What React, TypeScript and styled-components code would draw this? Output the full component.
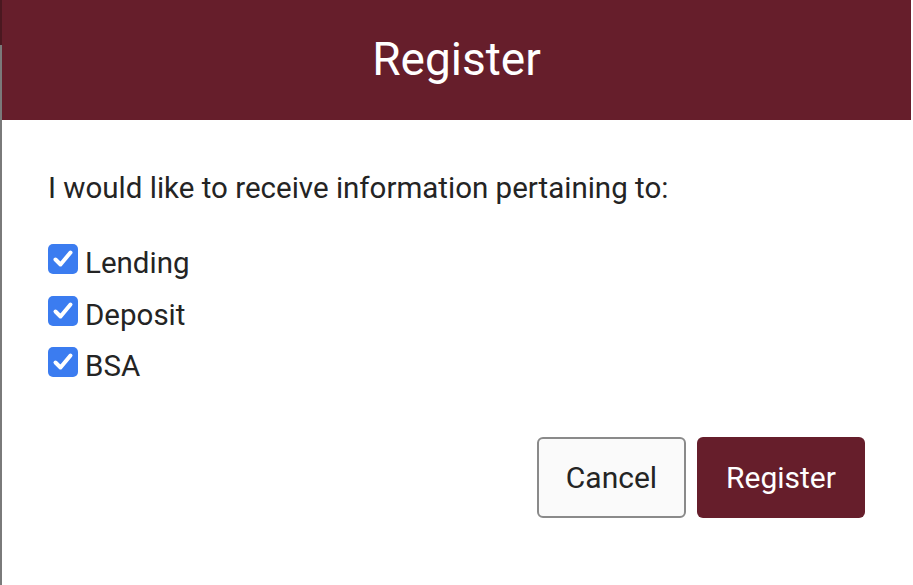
import { useState } from "react";
import styled, { createGlobalStyle } from "styled-components";

const GlobalStyle = createGlobalStyle`
  html, body {
    margin: 0;
    padding: 0;
    height: 100%;
  }
  body {
    font-family: Roboto, "Liberation Sans", Arial, sans-serif;
    background:
      linear-gradient(#4a1820, #4a1820) 0 0 / 2px 45px no-repeat,
      linear-gradient(#7a7a7a, #7a7a7a) 0 0 / 2px 100% no-repeat,
      #ffffff;
  }
`;

const Modal = styled.div`
  margin-left: 2px;
  width: 909px;
  background: #ffffff;
`;

const Header = styled.header`
  height: 120px;
  background: #661e2b;
  display: flex;
  align-items: center;
  justify-content: center;
  h2 {
    margin: 0;
    color: #ffffff;
    font-size: 46px;
    font-weight: 400;
    line-height: 1.2;
  }
`;

const Body = styled.div`
  padding: 51px 46px 0 46px;
`;

const Intro = styled.p`
  margin: 0 0 31px 0;
  font-size: 29.5px;
  line-height: 1.2;
  color: #242424;
`;

const OptionList = styled.div`
  display: flex;
  flex-direction: column;
`;

const Option = styled.label`
  height: 51.5px;
  display: flex;
  align-items: center;
  gap: 7px;
  cursor: pointer;
  font-size: 29.5px;
  color: #242424;
`;

const Box = styled.span<{ $checked: boolean }>`
  width: 30px;
  height: 30px;
  margin-bottom: 8px;
  border-radius: 5px;
  box-sizing: border-box;
  display: flex;
  align-items: center;
  justify-content: center;
  background: ${(p) => (p.$checked ? "#3b7cf0" : "#ffffff")};
  border: ${(p) => (p.$checked ? "none" : "2px solid #767676")};
  input {
    display: none;
  }
`;

const Actions = styled.div`
  display: flex;
  justify-content: flex-end;
  gap: 11px;
  margin-top: 45px;
`;

const Button = styled.button<{ $primary?: boolean }>`
  height: 81px;
  padding: 0;
  border-radius: 6px;
  font-family: Roboto, "Liberation Sans", Arial, sans-serif;
  font-size: 30px;
  cursor: pointer;
  box-sizing: border-box;
  width: ${(p) => (p.$primary ? "168px" : "149px")};
  background: ${(p) => (p.$primary ? "#661e2b" : "#fafafa")};
  color: ${(p) => (p.$primary ? "#ffffff" : "#242424")};
  border: ${(p) => (p.$primary ? "none" : "2px solid #8a8a8a")};
`;

const topics = ["Lending", "Deposit", "BSA"];

const App = () => {
  const [checked, setChecked] = useState<Record<string, boolean>>({
    Lending: true,
    Deposit: true,
    BSA: true,
  });

  return (
    <>
      <GlobalStyle />
      <Modal>
        <Header>
          <h2>Register</h2>
        </Header>
        <Body>
          <Intro>I would like to receive information pertaining to:</Intro>
          <OptionList>
            {topics.map((t) => (
              <Option key={t}>
                <Box $checked={checked[t]}>
                  <input
                    type="checkbox"
                    checked={checked[t]}
                    onChange={() => setChecked({ ...checked, [t]: !checked[t] })}
                  />
                  {checked[t] && (
                    <svg width="24" height="24" viewBox="0 0 24 24" fill="none">
                      <path
                        d="M4.5 12.5l5 5L19.5 5.5"
                        stroke="#ffffff"
                        strokeWidth="4"
                        strokeLinecap="round"
                        strokeLinejoin="round"
                      />
                    </svg>
                  )}
                </Box>
                {t}
              </Option>
            ))}
          </OptionList>
          <Actions>
            <Button>Cancel</Button>
            <Button $primary>Register</Button>
          </Actions>
        </Body>
      </Modal>
    </>
  );
};

export default App;
